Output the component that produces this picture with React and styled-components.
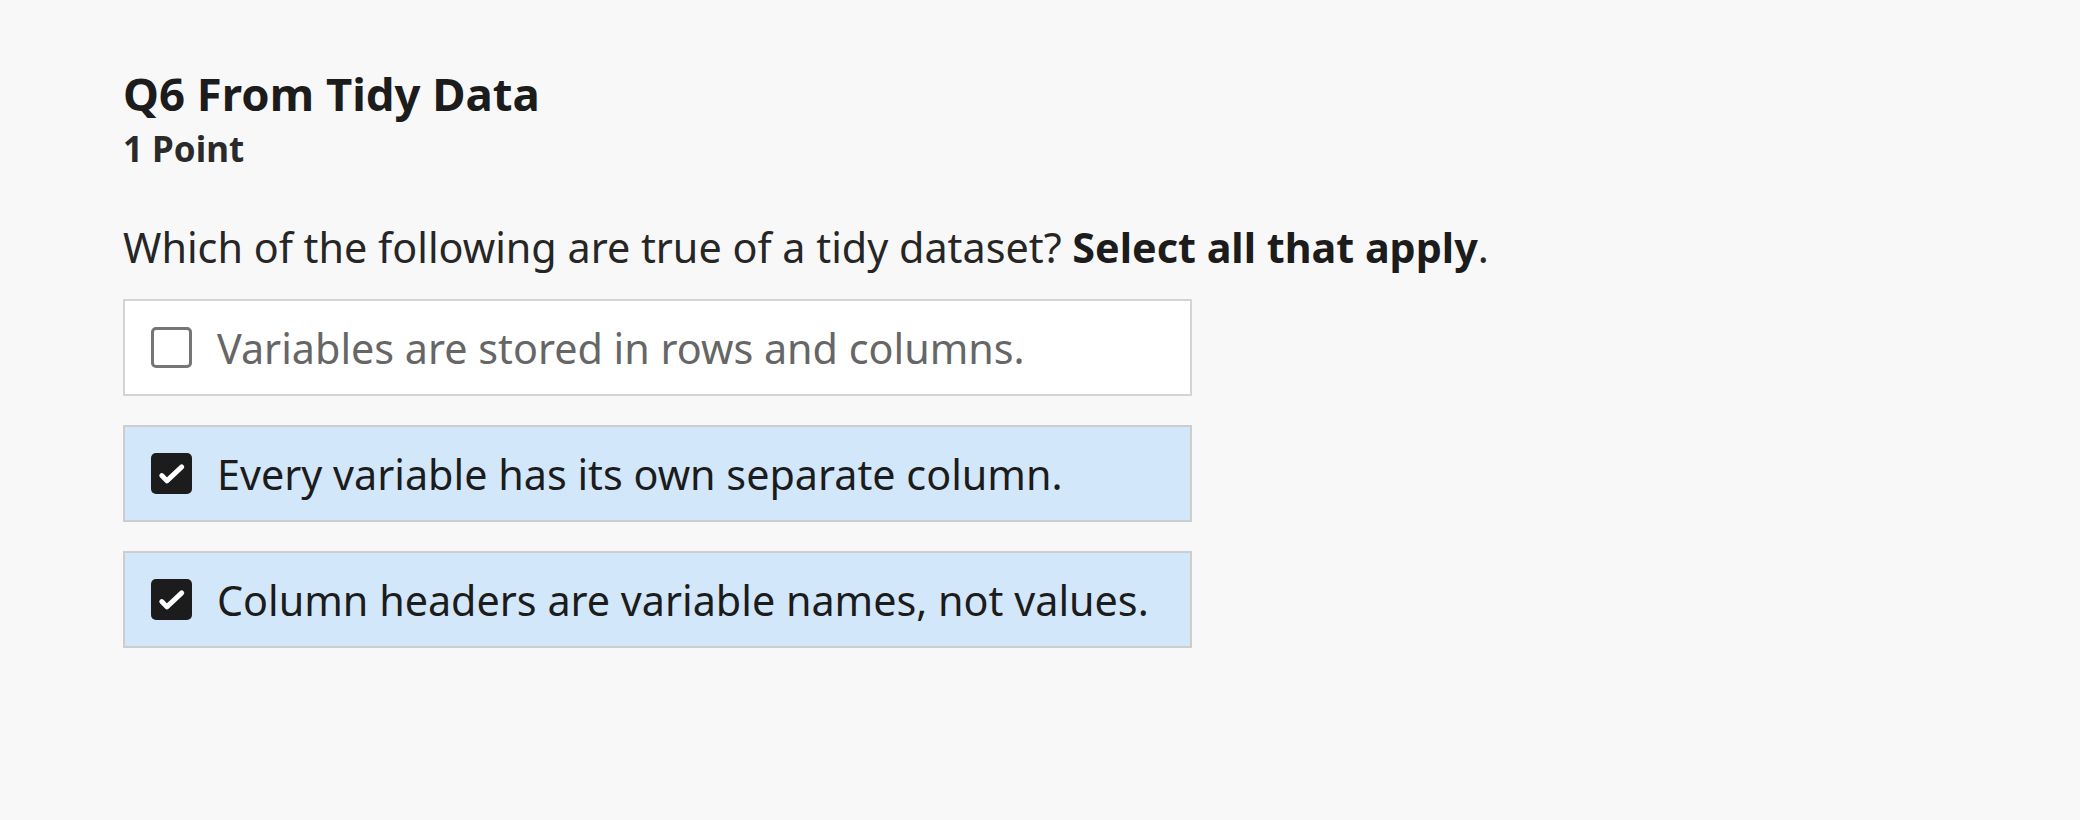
import React from "react";
import styled, { createGlobalStyle } from "styled-components";

const Global = createGlobalStyle`
  html, body { margin: 0; padding: 0; background: #f8f8f8; }
  body { font-family: "Noto Sans", "Open Sans", sans-serif; color: #1c1c1c; }
`;

const Page = styled.main`
  padding: 66px 0 0 123px;
  min-height: 820px;
  box-sizing: border-box;
`;

const Title = styled.h2`
  margin: 0;
  font-size: 45.5px;
  line-height: 54px;
  font-weight: 700;
  color: #1c1c1c;
`;

const Points = styled.div`
  margin-top: 8px;
  font-size: 35px;
  line-height: 42px;
  font-weight: 700;
  color: #2a2a2a;
`;

const Prompt = styled.p`
  margin: 48px 0 23px;
  font-size: 41.3px;
  line-height: 58px;
  color: #262626;
  strong { font-weight: 700; color: #1c1c1c; }
`;

const Options = styled.div`
  display: flex;
  flex-direction: column;
  gap: 29px;
  width: 1069px;
`;

const Option = styled.label`
  display: flex;
  align-items: center;
  gap: 25px;
  height: 97px;
  box-sizing: border-box;
  padding: 0 26px;
  border: 2px solid ${(p) => (p.$checked ? "#cbcdcf" : "#d4d4d4")};
  background: ${(p) => (p.$checked ? "#d3e7fa" : "#ffffff")};
  font-size: 41.3px;
  color: ${(p) => (p.$checked ? "#1c1c1c" : "#666666")};
`;

const Box = styled.span`
  flex: none;
  width: 41px;
  height: 41px;
  box-sizing: border-box;
  border-radius: 5px;
  display: flex;
  align-items: center;
  justify-content: center;
  background: ${(p) => (p.$checked ? "#1c1c1c" : "#ffffff")};
  border: ${(p) => (p.$checked ? "none" : "3px solid #767676")};
`;

const Check = () => (
  <svg width="41" height="41" viewBox="0 0 40 40" fill="none">
    <path d="M10.5 22l5 5.2L30 13.5" stroke="#fff" strokeWidth="4.8" strokeLinecap="round" strokeLinejoin="round" />
  </svg>
);

const items = [
  { text: "Variables are stored in rows and columns.", checked: false },
  { text: "Every variable has its own separate column.", checked: true },
  { text: "Column headers are variable names, not values.", checked: true },
];

export default function App() {
  return (
    <>
      <Global />
      <Page>
        <Title>Q6 From Tidy Data</Title>
        <Points>1 Point</Points>
        <Prompt>
          Which of the following are true of a tidy dataset? <strong>Select all that apply</strong>.
        </Prompt>
        <Options>
          {items.map((it) => (
            <Option key={it.text} $checked={it.checked}>
              <Box $checked={it.checked}>{it.checked && <Check />}</Box>
              <span>{it.text}</span>
            </Option>
          ))}
        </Options>
      </Page>
    </>
  );
}
